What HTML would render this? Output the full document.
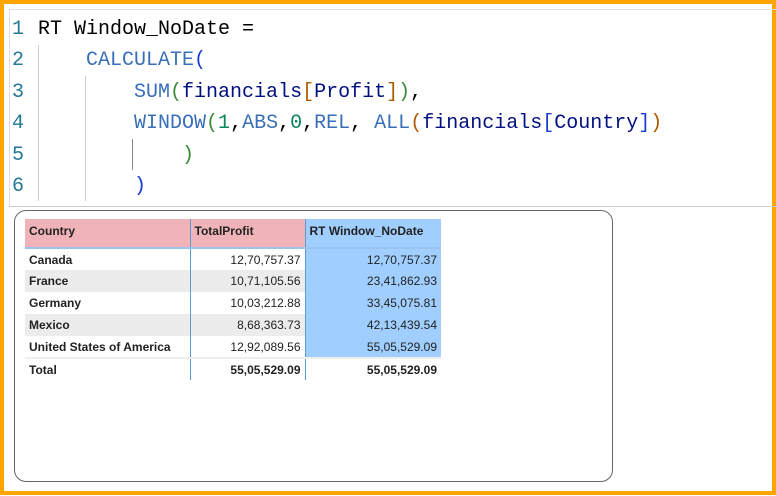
<!DOCTYPE html>
<html><head><style>
body{margin:0;width:776px;height:496px;background:#fff;position:relative;overflow:hidden;font-family:"Liberation Sans",sans-serif}
.ob{position:absolute;left:0;top:0;width:768px;height:487px;border:4px solid #ffa500;}
.ib{position:absolute;left:9px;top:9px;width:770px;height:196px;border-left:1px solid #ddd;border-top:1px solid #ddd;border-bottom:1px solid #ccc}
.code,.nums{position:absolute;top:14px;font-family:"Liberation Mono",monospace;font-size:20px;line-height:31.4px;white-space:pre;color:#000}
.nums{left:12px;color:#237893}
.code{left:38px}
.f{color:#3a6fb8}.p1{color:#3a8a3a}.p2{color:#b05a00}.p3{color:#1a3ad6}.n{color:#098658}.v{color:#001080}
.guide{position:absolute;width:1px;background:#ccc}
.card{position:absolute;left:14px;top:210px;width:597px;height:270px;border:1px solid #666;border-radius:12px}
table{position:absolute;left:25px;top:219px;border-collapse:collapse;font-size:12px;color:#222;table-layout:fixed;width:416px}
td{height:22px;padding:0 4px;box-sizing:border-box;overflow:hidden;white-space:nowrap}
th{height:29px;box-sizing:border-box;text-align:left;padding:0 4px 5px;font-weight:bold;background:#f0b4b8;border-bottom:2px solid #9cc3ef;white-space:nowrap}
th.b{background:#a0cfff}
td.r{text-align:right}
td.bl{background:#a0cfff}
tr.a td{background:#ececec}tr.a td.bl{background:#a0cfff}
td.c{font-weight:bold}
.v1{border-right:1px solid #5b9bd5}
tr.t td{font-weight:bold;border-top:2px solid #eee}
</style></head><body>
<div class="ob"></div><div class="ib"></div>
<div class="guide" style="left:38px;top:45px;height:156px"></div>
<div class="guide" style="left:85px;top:76px;height:125px"></div>
<div class="guide" style="left:132px;top:139px;height:31px;background:#888"></div>
<div class="nums">1
2
3
4
5
6</div>
<div class="code">RT Window_NoDate =
    <span class="f">CALCULATE</span><span class="p3">(</span>
        <span class="f">SUM</span><span class="p1">(</span><span class="v">financials</span><span class="p2">[</span><span class="v">Profit</span><span class="p2">]</span><span class="p1">)</span>,
        <span class="f">WINDOW</span><span class="p1">(</span><span class="n">1</span>,<span class="f">ABS</span>,<span class="n">0</span>,<span class="f">REL</span>, <span class="f">ALL</span><span class="p2">(</span><span class="v">financials</span><span class="p3">[</span><span class="v">Country</span><span class="p3">]</span><span class="p2">)</span>
            <span class="p1">)</span>
        <span class="p3">)</span></div>
<div class="card"></div>
<table>
<colgroup><col style="width:165px"><col style="width:115px"><col style="width:136px"></colgroup>
<tr><th class="v1">Country</th><th class="v1">TotalProfit</th><th class="b">RT Window_NoDate</th></tr>
<tr><td class="c v1">Canada</td><td class="r v1">12,70,757.37</td><td class="r bl">12,70,757.37</td></tr>
<tr class="a"><td class="c v1">France</td><td class="r v1">10,71,105.56</td><td class="r bl">23,41,862.93</td></tr>
<tr><td class="c v1">Germany</td><td class="r v1">10,03,212.88</td><td class="r bl">33,45,075.81</td></tr>
<tr class="a"><td class="c v1">Mexico</td><td class="r v1">8,68,363.73</td><td class="r bl">42,13,439.54</td></tr>
<tr><td class="c v1">United States of America</td><td class="r v1">12,92,089.56</td><td class="r bl">55,05,529.09</td></tr>
<tr class="t"><td class="v1">Total</td><td class="r v1">55,05,529.09</td><td class="r">55,05,529.09</td></tr>
</table>
</body></html>
